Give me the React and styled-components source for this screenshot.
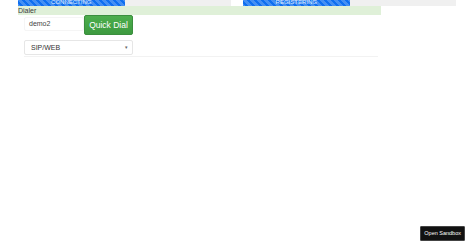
import React from "react";
import styled, { createGlobalStyle } from "styled-components";

const Global = createGlobalStyle`
  html, body { margin: 0; padding: 0; background: #fff; }
  body { font-family: "Liberation Sans", Arial, sans-serif; width: 474px; height: 248px; overflow: hidden; }
`;

const Page = styled.div`
  width: 474px;
  height: 248px;
  position: relative;
`;

const Bars = styled.div`
  display: flex;
  gap: 12px;
  padding: 0 18px;
  height: 6px;
`;

const Progress = styled.div`
  flex: 1;
  height: 6px;
  background: #f0f0f0;
  display: flex;
  overflow: hidden;
`;

const Fill = styled.div`
  width: ${(p) => p.pct}%;
  height: 100%;
  background-color: #0f6ff0;
  background-image: linear-gradient(
    45deg,
    rgba(255, 255, 255, 0.22) 25%,
    transparent 25%,
    transparent 50%,
    rgba(255, 255, 255, 0.22) 50%,
    rgba(255, 255, 255, 0.22) 75%,
    transparent 75%,
    transparent
  );
  background-size: 7px 7px;
  color: #dfeaff;
  font-size: 6px;
  line-height: 4px;
  text-align: center;
  overflow: hidden;
`;

const Panel = styled.div`
  margin: 0 93px 0 18px;
`;

const Heading = styled.div`
  background: #dff0d8;
  color: #3c3c3c;
  font-size: 7px;
  line-height: 9px;
  height: 9px;
`;

const Body = styled.div`
  margin: 0 3px 0 6px;
  padding: 0 0 1px;
  display: flex;
  flex-direction: column;
  gap: 5px;
  border-bottom: 1px solid #f2f2f2;
`;

const Row = styled.div`
  display: flex;
  align-items: flex-start;
`;

const Input = styled.div`
  width: 60px;
  height: 14px;
  margin-top: 2px;
  box-sizing: border-box;
  border: 1px solid #f5f5f5;
  border-radius: 2px;
  font-size: 7px;
  line-height: 12px;
  padding-left: 4px;
  color: #444;
`;

const Button = styled.div`
  width: 49px;
  height: 20px;
  box-sizing: border-box;
  background: #43a047;
  background-image: linear-gradient(#4cae4c, #3d9a40);
  border: 1px solid #3b8e3e;
  border-radius: 2px;
  color: #fff;
  font-size: 8.5px;
  line-height: 18px;
  text-align: center;
`;

const Select = styled.div`
  width: 109px;
  height: 15px;
  box-sizing: border-box;
  border: 1px solid #e6e6e6;
  border-radius: 2px;
  font-size: 7px;
  line-height: 13px;
  padding: 0 4px 0 6px;
  color: #333;
  display: flex;
  justify-content: space-between;
`;

const Caret = styled.span`
  font-size: 5px;
  color: #666;
`;

const Sandbox = styled.div`
  position: absolute;
  right: 9px;
  bottom: 7px;
  background: #111;
  color: #fff;
  font-size: 5.5px;
  padding: 0 3px;
  height: 13px;
  line-height: 13px;
  border-radius: 1px;
  border: 1px solid #444;
`;

export default function App() {
  return (
    <Page>
      <Global />
      <Bars>
        <Progress>
          <Fill pct={50}>CONNECTING</Fill>
        </Progress>
        <Progress>
          <Fill pct={50}>REGISTERING</Fill>
        </Progress>
      </Bars>
      <Panel>
        <Heading>Dialer</Heading>
        <Body>
          <Row>
            <Input>demo2</Input>
            <Button>Quick Dial</Button>
          </Row>
          <Select>
            SIP/WEB <Caret>▾</Caret>
          </Select>
        </Body>
      </Panel>
      <Sandbox>Open Sandbox</Sandbox>
    </Page>
  );
}
